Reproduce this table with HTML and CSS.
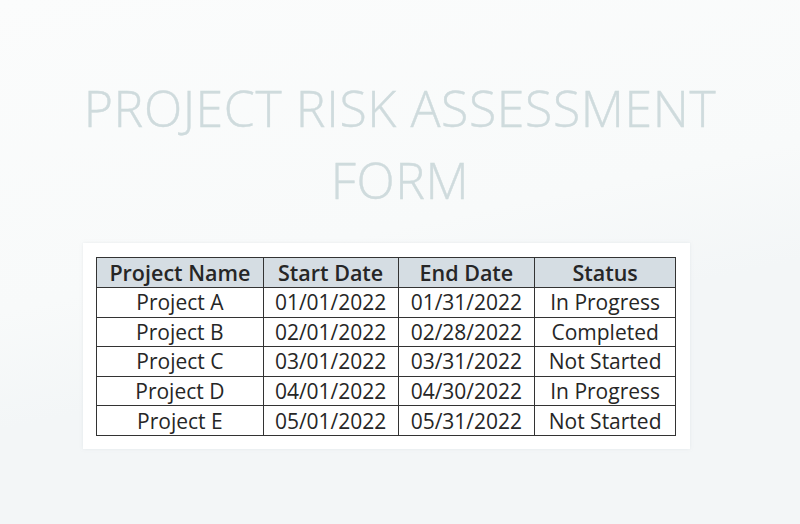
FILE: index.html
```html
<!DOCTYPE html>
<html lang="en">
<head>
<meta charset="utf-8">
<title>Project Risk Assessment Form</title>
<link rel="stylesheet" href="styles.css">
</head>
<body>
<main class="page">
  <h1 class="title">PROJECT RISK ASSESSMENT<br>FORM</h1>
  <section class="card">
    <table class="grid">
      <thead>
        <tr><th>Project Name</th><th>Start Date</th><th>End Date</th><th>Status</th></tr>
      </thead>
      <tbody>
        <tr><td>Project A</td><td>01/01/2022</td><td>01/31/2022</td><td>In Progress</td></tr>
        <tr><td>Project B</td><td>02/01/2022</td><td>02/28/2022</td><td>Completed</td></tr>
        <tr><td>Project C</td><td>03/01/2022</td><td>03/31/2022</td><td>Not Started</td></tr>
        <tr><td>Project D</td><td>04/01/2022</td><td>04/30/2022</td><td>In Progress</td></tr>
        <tr><td>Project E</td><td>05/01/2022</td><td>05/31/2022</td><td>Not Started</td></tr>
      </tbody>
    </table>
  </section>
</main>
</body>
</html>
```
FILE: styles.css
```css
html, body {
  margin: 0;
  padding: 0;
}
body {
  width: 800px;
  height: 524px;
  overflow: hidden;
  background: linear-gradient(168deg, #fbfcfc 0%, #f8fafa 45%, #f3f6f7 62%, #f3f6f7 100%);
  font-family: "Open Sans", "Noto Sans", sans-serif;
}
.page {
  display: flex;
  flex-direction: column;
  padding-top: 72px;
}
.title {
  margin: 0;
  font-family: "Open Sans", sans-serif;
  font-weight: 300;
  font-size: 50px;
  line-height: 72px;
  color: #cfdbdd;
  text-align: center;
  letter-spacing: 0.6px;
  -webkit-text-stroke: 0.4px #cfdbdd;
}
.card {
  margin: 27px 0 0 83px;
  width: 580px;
  padding: 14px 14px 13px 13px;
  background: #ffffff;
  box-shadow: 0 0 3px rgba(200, 210, 215, 0.35);
}
.grid {
  border-collapse: collapse;
  table-layout: fixed;
  color: #262626;
}
.grid th, .grid td {
  border: 1px solid #333;
  text-align: center;
  padding: 0;
  white-space: nowrap;
}
.grid th {
  background: #d5dde3;
  font-weight: 600;
  font-size: 21.5px;
  height: 29px;
}
.grid td {
  font-size: 21px;
  height: 28.6px;
}
.grid th:nth-child(1) { width: 166px; }
.grid th:nth-child(2) { width: 134px; }
.grid th:nth-child(3) { width: 136px; }
.grid th:nth-child(4) { width: 140px; }
```
